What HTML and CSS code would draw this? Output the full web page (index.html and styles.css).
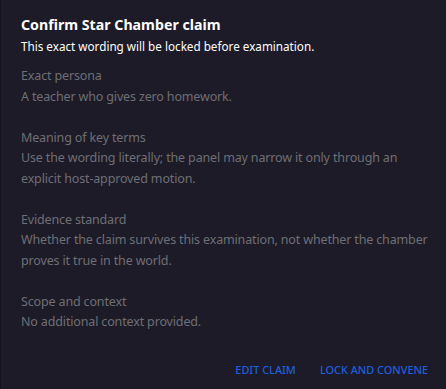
FILE: index.html
```html
<!DOCTYPE html>
<html lang="en">
<head>
    <meta charset="UTF-8">
    <meta name="viewport" content="width=device-width, initial-scale=1.0">
    <title>Confirm Star Chamber claim</title>
    <link rel="stylesheet" href="styles.css">
</head>
<body>
    <div class="dialog">
        <h2 class="title">Confirm Star Chamber claim</h2>
        <p class="subtitle">This exact wording will be locked before examination.</p>
        <div class="fields">
            <div class="field">
                <div class="label">Exact persona</div>
                <div class="value">A teacher who gives zero homework.</div>
            </div>
            <div class="field">
                <div class="label">Meaning of key terms</div>
                <div class="value">Use the wording literally; the panel may narrow it only through an explicit host-approved motion.</div>
            </div>
            <div class="field">
                <div class="label">Evidence standard</div>
                <div class="value">Whether the claim survives this examination, not whether the chamber proves it true in the world.</div>
            </div>
            <div class="field">
                <div class="label">Scope and context</div>
                <div class="value">No additional context provided.</div>
            </div>
        </div>
        <div class="actions">
            <button class="btn">Edit claim</button>
            <button class="btn">Lock and convene</button>
        </div>
    </div>
</body>
</html>
```

FILE: styles.css
```css
html, body {
    margin: 0;
    height: 100%;
}
body {
    background-color: #1c1b27;
    font-family: "Noto Sans", "Open Sans", sans-serif;
    color: #6f6f75;
}
.dialog {
    box-sizing: border-box;
    height: 100%;
    padding: 15px 16px 0 20px;
    display: flex;
    flex-direction: column;
    border-left: 1px solid #15141e;
}
.title {
    margin: 0;
    font-size: 14.2px;
    font-weight: 700;
    color: #ffffff;
    line-height: 20px;
}
.subtitle {
    margin: 2px 0 0;
    font-size: 11.7px;
    color: #ffffff;
    line-height: 18px;
}
.fields {
    margin-top: 11px;
    display: flex;
    flex-direction: column;
    gap: 20.5px;
}
.field {
    font-size: 12.5px;
    letter-spacing: -0.15px;
    line-height: 20.5px;
}
.actions {
    margin-top: auto;
    margin-right: -6px;
    padding-bottom: 8px;
    display: flex;
    justify-content: flex-end;
    gap: 8px;
}
.btn {
    background: none;
    border: none;
    padding: 4px 8px;
    font-family: inherit;
    font-size: 10.9px;
    font-weight: 500;
    text-transform: uppercase;
    color: #1e5fdf;
    cursor: pointer;
}
```
